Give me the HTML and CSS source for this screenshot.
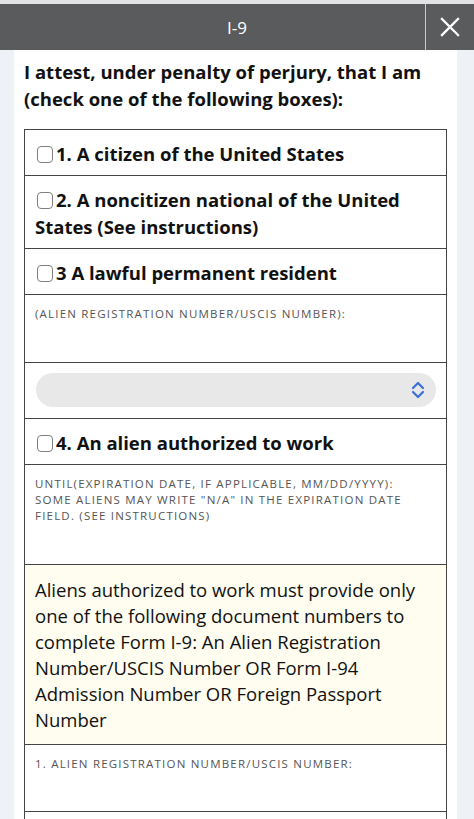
FILE: index.html
```html
<!DOCTYPE html>
<html lang="en">
<head>
<meta charset="utf-8">
<title>I-9</title>
<link rel="stylesheet" href="styles.css">
</head>
<body>
<div class="topstrip"></div>
<header class="titlebar">
  <div class="spacer"></div>
  <div class="title">I-9</div>
  <button class="close" aria-label="Close">
    <svg width="20" height="20" viewBox="0 0 20 20"><path d="M2 2 L18 18 M18 2 L2 18" stroke="#fff" stroke-width="2.3" stroke-linecap="square" fill="none"/></svg>
  </button>
</header>
<main class="panel">
  <h1 class="heading">I attest, under penalty of perjury, that I am (check one of the following boxes):</h1>
  <div class="table">
    <div class="row opt"><span class="box"></span>1. A citizen of the United States</div>
    <div class="row opt"><span class="box"></span>2. A noncitizen national of the United States (See instructions)</div>
    <div class="row opt"><span class="box"></span>3 A lawful permanent resident</div>
    <div class="row field">
      <div class="label">(Alien Registration Number/USCIS Number):</div>
      <div class="input"></div>
    </div>
    <div class="row selrow">
      <div class="select">
        <svg class="chev" width="14" height="18" viewBox="0 0 14 18"><path d="M2 7 L7 2 L12 7 M2 11 L7 16 L12 11" stroke="#3b6fd6" stroke-width="2.2" fill="none" stroke-linecap="round" stroke-linejoin="round"/></svg>
      </div>
    </div>
    <div class="row opt"><span class="box"></span>4. An alien authorized to work</div>
    <div class="row field">
      <div class="label">Until(Expiration Date, if applicable, mm/dd/yyyy): Some aliens may write "N/A" in the expiration date field. (See instructions)</div>
      <div class="input"></div>
    </div>
    <div class="row note">Aliens authorized to work must provide only one of the following document numbers to complete Form I-9: An Alien Registration Number/USCIS Number OR Form I-94 Admission Number OR Foreign Passport Number</div>
    <div class="row field">
      <div class="label">1. Alien Registration Number/USCIS Number:</div>
      <div class="input short"></div>
    </div>
    <div class="row empty"></div>
  </div>
</main>
</body>
</html>
```
FILE: styles.css
```css
html, body {
  margin: 0;
  padding: 0;
}
body {
  background: #eef1f5;
  font-family: "Open Sans", "Noto Sans", sans-serif;
  color: #111;
  height: 819px;
  overflow: hidden;
}
.topstrip {
  height: 4px;
  background: #e2e3e5;
}
.titlebar {
  height: 46px;
  background: #5a5b5d;
  display: grid;
  grid-template-columns: 49px 1fr 49px;
  align-items: stretch;
}
.title {
  color: #fff;
  font-size: 17px;
  display: flex;
  align-items: center;
  justify-content: center;
}
.close {
  border: 0;
  border-left: 1px solid #c9cacc;
  background: #5a5b5d;
  padding: 0;
  display: flex;
  align-items: center;
  justify-content: center;
}
.panel {
  background: #fff;
  margin: 0 17px 0 14px;
  padding: 8px 10px 0 10px;
}
.heading {
  font-size: 18.5px;
  line-height: 27px;
  font-weight: 700;
  margin: 0 0 17px 0;
  color: #111;
}
.table {
  border: 1px solid #444;
  border-bottom: 0;
}
.row {
  border-bottom: 1px solid #444;
}
.opt {
  font-size: 18.5px;
  line-height: 27px;
  font-weight: 700;
  padding: 9.5px 10px 8.5px 10px;
}
.box {
  display: inline-block;
  width: 14px;
  height: 15px;
  border: 1.2px solid #808080;
  border-radius: 4px;
  vertical-align: -2px;
  margin: 0 3px 0 2px;
  box-sizing: content-box;
}
.field {
  padding: 11px 30px 0 10px;
}
.label {
  font-size: 11.5px;
  line-height: 16px;
  letter-spacing: 1.2px;
  text-transform: uppercase;
  color: #555;
}
.input {
  height: 40px;
}
.input.short {
  height: 39px;
}
.selrow {
  padding: 10px 10px 11px 11px;
}
.select {
  height: 34px;
  border-radius: 17px;
  background: #e8e8e8;
  display: flex;
  align-items: center;
  justify-content: flex-end;
  padding-right: 11px;
}
.note {
  background: #fffdf0;
  font-size: 18.5px;
  line-height: 26px;
  padding: 12px 10px 11px 10px;
  color: #111;
}
.empty {
  height: 40px;
}
```
